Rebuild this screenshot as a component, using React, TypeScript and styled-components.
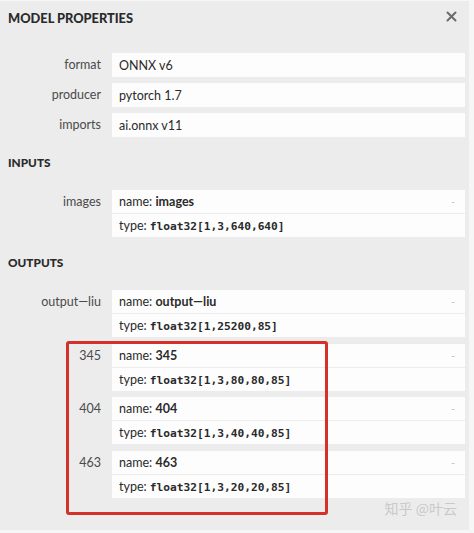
import styled, { createGlobalStyle } from "styled-components"

const GlobalStyle = createGlobalStyle`
    html, body {
        margin: 0;
        padding: 0;
        background: #f6f6f6;
    }
    body {
        font-family: Lato, "Noto Sans", sans-serif;
    }
`

type Arg = {
    label: string,
    name: string,
    type: string
}

const properties = [
    { label: 'format', value: 'ONNX v6' },
    { label: 'producer', value: 'pytorch 1.7' },
    { label: 'imports', value: 'ai.onnx v11' },
]

const inputs: Arg[] = [
    { label: 'images', name: 'images', type: 'float32[1,3,640,640]' },
]

const outputs: Arg[] = [
    { label: 'output—liu', name: 'output—liu', type: 'float32[1,25200,85]' },
    { label: '345', name: '345', type: 'float32[1,3,80,80,85]' },
    { label: '404', name: '404', type: 'float32[1,3,40,40,85]' },
    { label: '463', name: '463', type: 'float32[1,3,20,20,85]' },
]

function CloseIcon() {
    return (
        <svg width="11" height="11" viewBox="0 0 11 11">
            <path d="M1.5 1.5 L9.5 9.5 M9.5 1.5 L1.5 9.5" stroke="#6a6a6a" strokeWidth="2" strokeLinecap="round" />
        </svg>
    )
}

function ArgRow({ arg }: Readonly<{ arg: Arg }>) {
    return (
        <Row>
            <Label>{arg.label}</Label>
            <Box>
                <Line $height={23}>
                    <span>name: <b>{arg.name}</b></span>
                    <Toggle>-</Toggle>
                </Line>
                <Divider />
                <Line $height={23}>
                    <span>type: <Mono>{arg.type}</Mono></span>
                </Line>
            </Box>
        </Row>
    )
}

function App() {
    return (
        <>
            <GlobalStyle />
            <Panel>
                <Header>
                    <Title>MODEL PROPERTIES</Title>
                    <CloseButton><CloseIcon /></CloseButton>
                </Header>
                <List className="props">
                    {properties.map(p => (
                        <Row key={p.label}>
                            <Label>{p.label}</Label>
                            <Box><Line $height={24}>{p.value}</Line></Box>
                        </Row>
                    ))}
                </List>
                <SectionTitle>INPUTS</SectionTitle>
                <List>
                    {inputs.map(a => <ArgRow key={a.label} arg={a} />)}
                </List>
                <SectionTitle>OUTPUTS</SectionTitle>
                <List>
                    {outputs.map(a => <ArgRow key={a.label} arg={a} />)}
                    <Highlight />
                </List>
                <Watermark>知乎 @叶云</Watermark>
            </Panel>
        </>
    )
}

const Panel = styled.div`
    position: relative;
    margin-top: 1px;
    width: 469px;
    height: 529px;
    box-sizing: border-box;
    background: #ececec;
    color: #333;
    font-size: 12.5px;
`

const Header = styled.div`
    height: 34px;
    display: flex;
    align-items: center;
    padding: 0 12px 0 8px;
`

const Title = styled.span`
    font-size: 12.8px;
    font-weight: 900;
    color: #2a2a2a;
    flex-grow: 1;
`

const CloseButton = styled.span`
    display: flex;
    align-items: center;
    margin-top: -4px;
`

const List = styled.div`
    display: flex;
    flex-direction: column;
    gap: 6.5px;
    margin-top: 17px;
    position: relative;
    &.props {
        margin-top: 18px;
        gap: 6px;
    }
`

const Row = styled.div`
    display: grid;
    grid-template-columns: 101px 1fr;
    column-gap: 11px;
    padding-right: 4px;
`

const Label = styled.div`
    text-align: right;
    color: #4a4a4a;
    line-height: 23px;
    white-space: nowrap;
`

const Box = styled.div`
    background: #fdfdfd;
    display: flex;
    flex-direction: column;
`

const Line = styled.div<{ $height: number }>`
    height: ${({ $height }) => $height}px;
    display: flex;
    align-items: center;
    padding: 0 10px 0 7px;
    color: #2a2a2a;
    & > span:first-child {
        flex-grow: 1;
    }
    & b {
        font-weight: bold;
    }
`

const Divider = styled.div`
    height: 1px;
    background: #ececec;
`

const Toggle = styled.span`
    color: #c4c4c4;
    font-size: 11px;
`

const Mono = styled.b`
    font-family: "DejaVu Sans Mono", "Liberation Mono", monospace;
    font-size: 11.2px;
    font-weight: bold;
`

const SectionTitle = styled.div`
    margin-top: 16px;
    height: 20px;
    line-height: 20px;
    padding-left: 8px;
    font-size: 11.8px;
    font-weight: 900;
    color: #2a2a2a;
`

const Highlight = styled.div`
    position: absolute;
    left: 66px;
    top: 51px;
    width: 262px;
    height: 174px;
    box-sizing: border-box;
    border: 3px solid #d3312a;
    border-radius: 3px;
    pointer-events: none;
`

const Watermark = styled.div`
    position: absolute;
    right: 12px;
    bottom: 12px;
    font-size: 14px;
    color: #c9c9c9;
    font-family: "Noto Sans CJK SC", sans-serif;
`

export default App
